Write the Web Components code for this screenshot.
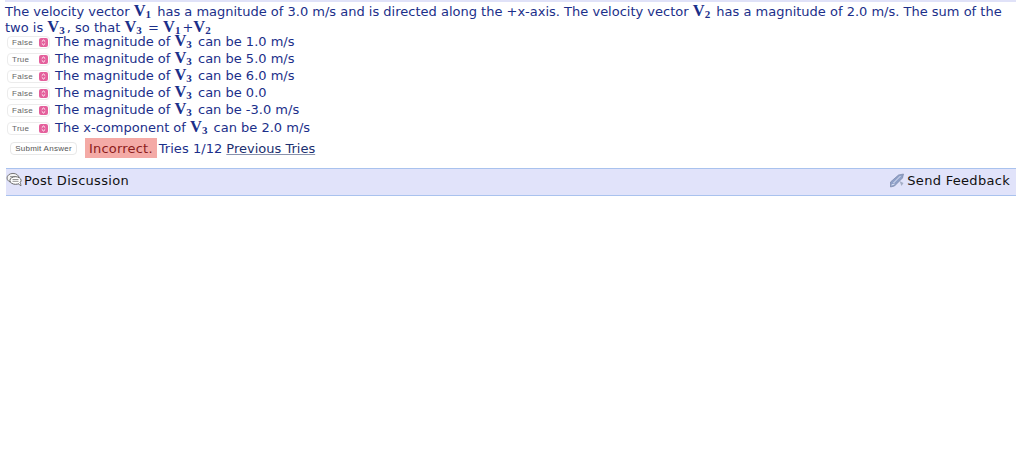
<!DOCTYPE html>
<html>
<head>
<meta charset="utf-8">
<title>Problem</title>
<style>
    html, body { margin: 0; background: #fff; }
    body { padding: 0 8px 0 5px; font-family: "DejaVu Sans", sans-serif; font-size: 13px; color: #1b2f8a; }
</style>
</head>
<body>
<top-rule></top-rule>
<problem-text>The velocity vector <vec-name n="1"></vec-name> has a magnitude of 3.0 m/s and is directed along the +x-axis. The velocity vector <vec-name n="2"></vec-name> has a magnitude of 2.0 m/s. The sum of the two is <vec-name n="3"></vec-name>, so that <vec-name n="3"></vec-name> = <vec-name n="1"></vec-name>+<vec-name n="2"></vec-name></problem-text>
<tf-row value="False">The magnitude of <vec-name n="3"></vec-name> can be 1.0 m/s</tf-row>
<tf-row value="True">The magnitude of <vec-name n="3"></vec-name> can be 5.0 m/s</tf-row>
<tf-row value="False">The magnitude of <vec-name n="3"></vec-name> can be 6.0 m/s</tf-row>
<tf-row value="False">The magnitude of <vec-name n="3"></vec-name> can be 0.0</tf-row>
<tf-row value="False">The magnitude of <vec-name n="3"></vec-name> can be -3.0 m/s</tf-row>
<tf-row value="True">The x-component of <vec-name n="3"></vec-name> can be 2.0 m/s</tf-row>
<answer-status tries="Tries 1/12" link="Previous Tries"></answer-status>
<action-bar></action-bar>

<script>
class TopRule extends HTMLElement {
    constructor() {
        super();
        this.attachShadow({mode: 'open'});
        this.shadowRoot.innerHTML = `<style>
            :host { display: block; height: 2px; background: #e0e2f8; }
        </style>`;
    }
}

class VecName extends HTMLElement {
    constructor() {
        super();
        this.attachShadow({mode: 'open'});
    }
    connectedCallback() {
        this.shadowRoot.innerHTML = `<style>
            :host { display: inline; font-family: "Liberation Serif", serif; font-weight: bold; font-size: 16.5px; margin: 0 2px 0 0; color: #1b2f8a; }
            sub { font-size: 11px; line-height: 0; vertical-align: -2px; }
        </style>V<sub>${this.getAttribute('n')}</sub>`;
    }
}

class ProblemText extends HTMLElement {
    constructor() {
        super();
        this.attachShadow({mode: 'open'});
        this.shadowRoot.innerHTML = `<style>
            :host { display: block; line-height: 15px; padding-top: 1px; height: 30px; box-sizing: border-box; }
        </style><slot></slot>`;
    }
}

class TfRow extends HTMLElement {
    constructor() {
        super();
        this.attachShadow({mode: 'open'});
    }
    connectedCallback() {
        this.shadowRoot.innerHTML = `<style>
            :host { display: flex; align-items: center; height: 17.2px; gap: 5px; padding-left: 2px; white-space: nowrap; }
            .select {
                display: flex; align-items: center; justify-content: space-between;
                box-sizing: border-box; width: 43px; height: 13px; margin-top: 3px; padding: 0 1px 0 4px;
                background: #fff; border: 1px solid #ececec; border-radius: 4px;
                font: 8px "Liberation Sans", sans-serif; letter-spacing: 0.3px; color: #666;
            }
            .arrows { width: 9px; height: 9px; border-radius: 2px; background: #e4609c; display: block; }
        </style>
        <span class="select"><span>${this.getAttribute('value')}</span>
            <svg class="arrows" viewBox="0 0 9 9"><path d="M2.8 3.6 4.5 2l1.7 1.6M2.8 5.4 4.5 7l1.7-1.6" fill="none" stroke="#fff" stroke-width="1"/></svg>
        </span>
        <span><slot></slot></span>`;
    }
}

class AnswerStatus extends HTMLElement {
    constructor() {
        super();
        this.attachShadow({mode: 'open'});
    }
    connectedCallback() {
        this.shadowRoot.innerHTML = `<style>
            :host { display: flex; align-items: center; height: 20px; margin-top: 3px; padding-left: 5px; white-space: nowrap; }
            button {
                all: unset; box-sizing: border-box; width: 67px; height: 13px; text-align: center;
                background: #fff; border: 1px solid #e8e8e8; border-radius: 4px;
                font: 8px/11px "Liberation Sans", sans-serif; letter-spacing: 0.25px; color: #555;
            }
            .bad { margin-left: 8px; padding: 0 4px; height: 20px; line-height: 21px; background: #f4aaa6; color: #8c1c1c; letter-spacing: 0.2px; }
            .tries { margin-left: 2px; letter-spacing: 0.05px; line-height: 21px; }
            a { margin-left: 4px; color: #1b2f6f; line-height: 21px; text-decoration: underline; text-decoration-color: #8a93ad; text-underline-offset: 1px; }
        </style>
        <button>Submit Answer</button>
        <span class="bad">Incorrect.</span>
        <span class="tries">${this.getAttribute('tries')}</span>
        <a href="#">${this.getAttribute('link')}</a>`;
    }
}

class ActionBar extends HTMLElement {
    constructor() {
        super();
        this.attachShadow({mode: 'open'});
        this.shadowRoot.innerHTML = `<style>
            :host {
                display: flex; justify-content: space-between; align-items: center;
                box-sizing: border-box; height: 28px; margin: 10px 0 0 1px; padding: 0 6px 4px 0;
                background: #e1e3fa; border-top: 1px solid #a9c2ee; border-bottom: 1px solid #a9c2ee;
                color: #111; letter-spacing: 0.3px; white-space: nowrap;
            }
            span { display: flex; align-items: center; gap: 1px; }
            svg { width: 17px; height: 16px; display: block; }
        </style>
        <span>
            <svg viewBox="0 0 17 16">
                <ellipse cx="7" cy="6" rx="6" ry="4.6" fill="#f4f4f4" stroke="#777"/>
                <path d="M4 4.5h6M4 6.3h6M4 8h5" stroke="#888" stroke-width=".8"/>
                <ellipse cx="9.5" cy="8.5" rx="5.6" ry="3.8" fill="#fff" stroke="#666"/>
                <path d="M6.5 7.5h6M6.5 9.3h6" stroke="#777" stroke-width=".8"/>
                <path d="M12 11.5l3 2.4-.6-3.4" fill="#fff" stroke="#666" stroke-width=".8"/>
            </svg>
            Post Discussion
        </span>
        <span>
            <svg viewBox="0 0 17 16" style="width:18px">
                <path d="M2 10 10 3l5-1-1 4-8 8-4 1z" fill="#8fa0c8" stroke="#7a86a8" stroke-width=".7"/>
                <path d="M5 11l7-7M3 13l3-1" stroke="#dfe5f5" stroke-width="1"/>
                <path d="M11 9l4 2-2 3z" fill="#a5aec6"/>
            </svg>
            Send Feedback
        </span>`;
    }
}

customElements.define('top-rule', TopRule);
customElements.define('vec-name', VecName);
customElements.define('problem-text', ProblemText);
customElements.define('tf-row', TfRow);
customElements.define('answer-status', AnswerStatus);
customElements.define('action-bar', ActionBar);
</script>
</body>
</html>
